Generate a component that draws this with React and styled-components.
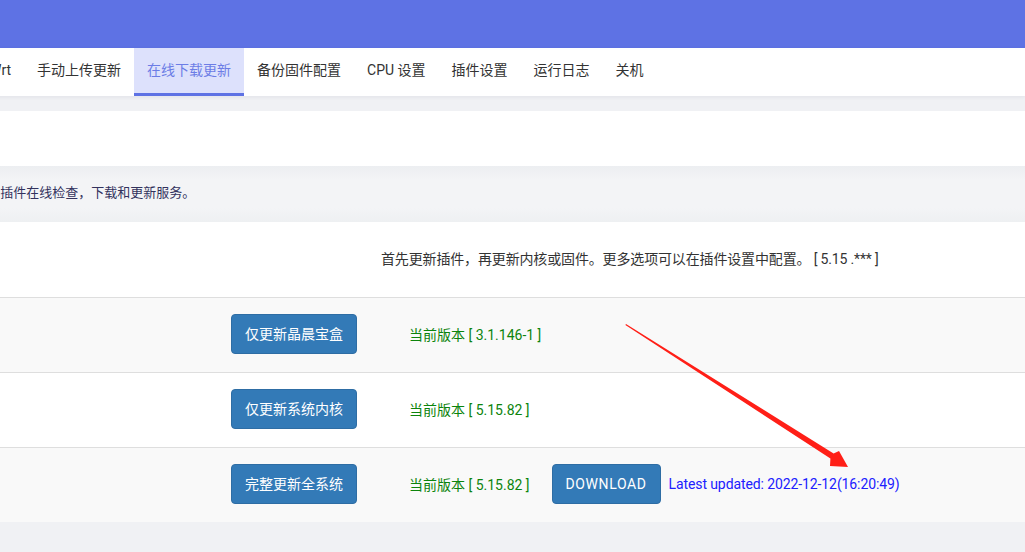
import React from "react";
import styled, { createGlobalStyle } from "styled-components";

const GlobalStyle = createGlobalStyle`
  html, body {
    margin: 0;
    padding: 0;
    background: #f0f1f4;
    font-family: Roboto, "Noto Sans CJK SC", sans-serif;
    font-size: 14px;
    color: #32325d;
    overflow: hidden;
  }
`;

// the screenshot is a horizontally scrolled view of a wider page
const SCROLL = 215;

const Viewport = styled.div`
  position: relative;
  width: 100vw;
  height: 100vh;
  overflow: hidden;
`;

const Page = styled.div`
  margin-left: -${SCROLL}px;
  width: calc(100vw + ${SCROLL}px);
  display: flex;
  flex-direction: column;
`;

const Header = styled.header`
  height: 48px;
  background: #5e72e4;
`;

const Tabs = styled.ul`
  display: flex;
  margin: 0;
  padding: 0 0 0 127px;
  list-style: none;
  height: 48px;
  background: #fff;
  box-shadow: 0 1px 4px rgba(50, 50, 93, 0.08);
`;

const Tab = styled.li`
  display: flex;
  align-items: center;
  padding: 0 13px 3px;
  box-sizing: border-box;
  height: 48px;
  white-space: nowrap;
  border-bottom: 3px solid ${(p) => (p.$active ? "#5e72e4" : "transparent")};
  background: ${(p) => (p.$active ? "#dde1fc" : "transparent")};
  color: ${(p) => (p.$active ? "#6c7de6" : "#333")};
`;

const TitleBlock = styled.div`
  margin-top: 15px;
  height: 55px;
  background: #fff;
`;

const Description = styled.div`
  height: 56px;
  box-sizing: border-box;
  display: flex;
  align-items: center;
  padding: 0 0 6px 54px;
  background: linear-gradient(#eceef1, #f3f4f6 25%, #f3f4f6 75%, #eef0f2);
  color: #32325d;
  font-size: 13px;
  white-space: nowrap;
`;

const Form = styled.div`
  display: flex;
  flex-direction: column;
`;

const Row = styled.div`
  height: 75px;
  box-sizing: border-box;
  display: flex;
  align-items: center;
  padding-left: ${(p) => p.$indent}px;
  padding-bottom: 3px;
  background: ${(p) => (p.$alt ? "#f9f9f9" : "#fff")};
  border-top: ${(p) => (p.$first ? "none" : "1px solid #dedede")};
  white-space: nowrap;
`;

const Notice = styled.span`
  color: #333;
  letter-spacing: -0.15px;
`;

const Button = styled.button`
  font-family: Roboto, "Noto Sans CJK SC", sans-serif;
  font-size: 14px;
  line-height: 20px;
  padding: 9px 13px;
  color: #fff;
  background: #337ab7;
  border: 1px solid #2e6da4;
  border-radius: 4px;
  letter-spacing: ${(p) => (p.$wide ? "0.6px" : "0")};
  margin-left: ${(p) => p.$gap || 0}px;
`;

const Version = styled.span`
  color: #0c840c;
  margin-left: 52px;
`;

const Updated = styled.span`
  color: #2020ff;
  margin-left: 8px;
  letter-spacing: -0.1px;
`;

const Overlay = styled.svg`
  position: absolute;
  top: 0;
  left: 0;
  pointer-events: none;
`;

const tabs = [
  "安装 OpenWrt",
  "手动上传更新",
  "在线下载更新",
  "备份固件配置",
  "CPU 设置",
  "插件设置",
  "运行日志",
  "关机",
];

export default function App() {
  return (
    <Viewport>
      <GlobalStyle />
      <Page>
        <Header />
        <Tabs>
          {tabs.map((t) => (
            <Tab key={t} $active={t === "在线下载更新"}>
              {t}
            </Tab>
          ))}
        </Tabs>
        <TitleBlock />
        <Description>
          提供 OpenWrt 固件，内核和插件在线检查，下载和更新服务。
        </Description>
        <Form>
          <Row $first $indent={SCROLL + 381}>
            <Notice>
              首先更新插件，再更新内核或固件。更多选项可以在插件设置中配置。 [ 5.15 .*** ]
            </Notice>
          </Row>
          <Row $alt $indent={SCROLL + 231}>
            <Button>仅更新晶晨宝盒</Button>
            <Version>当前版本 [ 3.1.146-1 ]</Version>
          </Row>
          <Row $indent={SCROLL + 231}>
            <Button>仅更新系统内核</Button>
            <Version>当前版本 [ 5.15.82 ]</Version>
          </Row>
          <Row $alt $indent={SCROLL + 231}>
            <Button>完整更新全系统</Button>
            <Version>当前版本 [ 5.15.82 ]</Version>
            <Button $gap={22} $wide>
              DOWNLOAD
            </Button>
            <Updated>Latest updated: 2022-12-12(16:20:49)</Updated>
          </Row>
        </Form>
      </Page>
      <Overlay width="1025" height="552" viewBox="0 0 1025 552">
        <polygon
          fill="#ff1f17"
          points="626,324 833.6,453.5 839,451 848,467 830,466 830.4,458.5 625.4,325"
        />
      </Overlay>
    </Viewport>
  );
}
